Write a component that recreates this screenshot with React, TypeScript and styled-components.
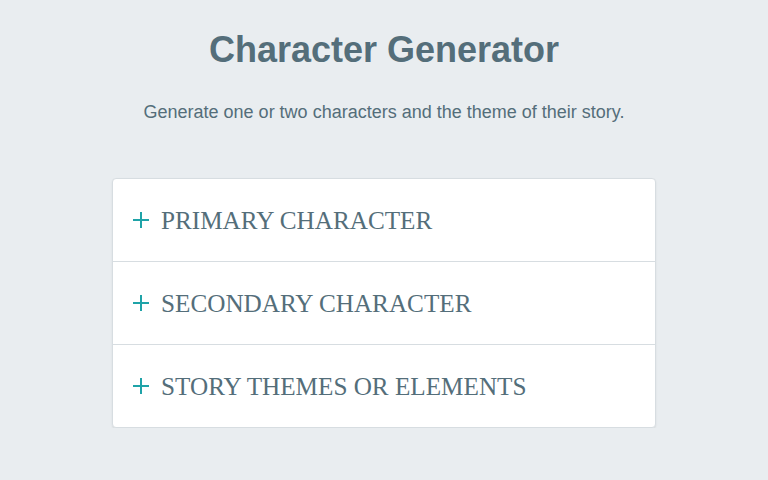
import React from 'react'
import styled, { createGlobalStyle } from 'styled-components'

const GlobalStyle = createGlobalStyle`
  html, body {
    margin: 0;
    padding: 0;
    background: #e9edf0;
  }
`

const sections = ['PRIMARY CHARACTER', 'SECONDARY CHARACTER', 'STORY THEMES OR ELEMENTS']

const PlusIcon = () => (
  <svg width="18" height="18" viewBox="0 0 18 18" aria-hidden="true">
    <path d="M9 1v16M1 9h16" stroke="#1fa3a8" strokeWidth="2" fill="none" />
  </svg>
)

const App = () => {
  return (
    <Page>
      <GlobalStyle />
      <Title>Character Generator</Title>
      <Subtitle>Generate one or two characters and the theme of their story.</Subtitle>
      <Card>
        {sections.map((label) => (
          <Row key={label}>
            <PlusIcon />
            <RowLabel>{label}</RowLabel>
          </Row>
        ))}
      </Card>
    </Page>
  )
}

export default App

const Page = styled.main`
  display: flex;
  flex-direction: column;
  align-items: center;
  padding-top: 29px;
  font-family: 'Liberation Sans', Arial, sans-serif;
  color: #546e7a;
`

const Title = styled.h1`
  margin: 0;
  font-size: 36px;
  line-height: 42px;
  font-weight: 700;
`

const Subtitle = styled.p`
  margin: 29px 0 0;
  font-size: 18px;
  line-height: 24px;
`

const Card = styled.section`
  width: 542px;
  margin-top: 54px;
  background: #fff;
  border: 1px solid #d7dde1;
  border-radius: 4px;
  box-shadow: 0 1px 2px rgba(0, 0, 0, 0.08);
  overflow: hidden;
`

const Row = styled.div`
  display: flex;
  align-items: center;
  gap: 11px;
  height: 82px;
  padding: 0 19px;
  cursor: pointer;

  & + & {
    border-top: 1px solid #d7dde1;
  }
`

const RowLabel = styled.span`
  padding-top: 2px;
  font-family: 'Liberation Serif', 'Times New Roman', serif;
  font-size: 25.2px;
  color: #546e7a;
`
